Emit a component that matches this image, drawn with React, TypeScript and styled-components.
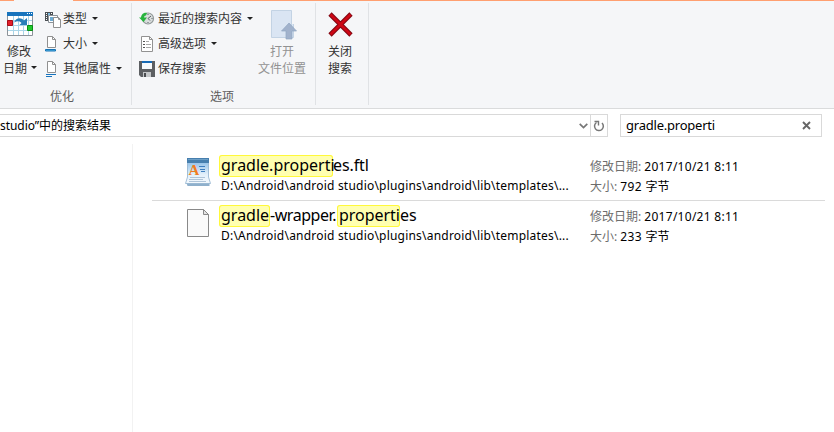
import React from "react";
import styled, { createGlobalStyle } from "styled-components";

const Global = createGlobalStyle`
  * { box-sizing: border-box; }
  body { margin: 0; background: #fff; overflow: hidden; }
  svg { display: block; flex: none; }
`;

const Window = styled.div`
  width: 834px;
  height: 432px;
  display: flex;
  flex-direction: column;
  background: #fff;
  color: #000;
  font: 12px/18px "Noto Sans", "Noto Sans CJK SC", sans-serif;
  white-space: nowrap;
`;

const TopEdge = styled.div`
  height: 1px;
  display: flex;
  justify-content: space-between;
  background: #f5f6f7;
`;
const Accent = styled.div<{ $w: number }>`
  width: ${(p) => p.$w}px;
  background: #ff9f70;
`;

const Ribbon = styled.div`
  height: 108px;
  display: flex;
  background: #f5f6f8;
  border-bottom: 1px solid #dadbdc;
  color: #333;
  font-family: "Noto Sans CJK SC", sans-serif;
`;
const Group = styled.section<{ $w: number }>`
  width: ${(p) => p.$w}px;
  height: 102px;
  margin-top: 2px;
  border-right: 1px solid #e0e2e5;
  display: flex;
  flex-direction: column;
`;
const Controls = styled.div`
  height: 84px;
  display: flex;
`;
const GroupLabel = styled.div<{ $shift?: number }>`
  text-align: center;
  color: #5c5c5c;
  padding-right: ${(p) => p.$shift ?? 0}px;
`;
const BigButton = styled.div<{ $w: number; $ml?: number; $off?: boolean }>`
  width: ${(p) => p.$w}px;
  margin-left: ${(p) => p.$ml ?? 0}px;
  display: flex;
  flex-direction: column;
  align-items: center;
  color: ${(p) => (p.$off ? "#929292" : "inherit")};
`;
const IconSlot = styled.div<{ $top: number; $left?: number }>`
  height: 39px;
  padding: ${(p) => p.$top}px 0 0 ${(p) => p.$left ?? 0}px;
`;
const Line = styled.div<{ $pr?: number }>`
  height: 17px;
  line-height: 17px;
  padding-right: ${(p) => p.$pr ?? 0}px;
  display: flex;
  align-items: center;
`;
const Stack = styled.div<{ $ml: number }>`
  margin-left: ${(p) => p.$ml}px;
  padding-top: 3px;
  display: flex;
  flex-direction: column;
`;
const SmallButton = styled.div<{ $gap: number }>`
  height: 25px;
  display: flex;
  align-items: center;
  gap: ${(p) => p.$gap}px;
  svg { margin-top: 1px; }
  span { margin-bottom: 1px; }
`;
const Caret = styled.i<{ $ml?: number }>`
  margin-left: ${(p) => p.$ml ?? 5}px;
  border: 3px solid transparent;
  border-top-color: #222;
  border-bottom: 0;
`;

const Bars = styled.div`
  height: 35px;
  padding: 5px 12px 7px 0;
  display: flex;
  justify-content: space-between;
`;
const Address = styled.div`
  width: 608px;
  height: 23px;
  border: 1px solid #d9d9d9;
  border-left: 0;
  display: flex;
  align-items: center;
`;
const AddressText = styled.div`
  flex: 1;
  line-height: 21px;
`;
const Latin = styled.span<{ $ls: number }>`
  letter-spacing: ${(p) => p.$ls}px;
`;
const Refresh = styled.div`
  width: 17px;
  height: 21px;
  margin-left: 2px;
  border-left: 1px solid #d9d9d9;
  display: flex;
  align-items: center;
  justify-content: center;
`;
const Search = styled.div`
  width: 202px;
  height: 23px;
  padding: 0 10px 0 5px;
  border: 1px solid #d9d9d9;
  display: flex;
  align-items: center;
  justify-content: space-between;
  font-size: 13px;
  line-height: 21px;
`;

const Body = styled.div`
  flex: 1;
  display: flex;
`;
const NavPane = styled.div`
  width: 133px;
  border-right: 1px solid #f2f2f2;
`;
const Results = styled.div`
  width: 673px;
  margin-left: 19px;
  padding-top: 7px;
`;
const Item = styled.div<{ $last?: boolean }>`
  height: 50px;
  display: flex;
  border-bottom: 1px solid ${(p) => (p.$last ? "transparent" : "#dadada")};
`;
const FileIcon = styled.div`
  width: 67px;
  padding: 6px 0 0 32px;
`;
const Info = styled.div`
  width: 371px;
`;
const Title = styled.div`
  height: 22px;
  margin-top: 4px;
  display: flex;
  font-size: 16px;
  line-height: 22px;
`;
const Part = styled.span<{ $hit?: boolean; $w: number; $ls: number }>`
  width: ${(p) => p.$w}px;
  height: 22px;
  letter-spacing: ${(p) => p.$ls}px;
  padding-left: ${(p) => (p.$hit ? 2 : 0)}px;
  line-height: 21px;
  border-radius: 3px;
  background: ${(p) => (p.$hit ? "#ffffb0" : "none")};
  box-shadow: ${(p) => (p.$hit ? "inset 0 0 0 1px #fff83a" : "none")};
`;
const Path = styled.div`
  padding-left: 2px;
  font-size: 12px;
  line-height: 18px;
`;
const Meta = styled.div`
  padding-top: 6px;
  line-height: 20px;
`;
const Muted = styled.span`
  color: #6d6d6d;
`;

const CalendarIcon = () => (
  <svg width="26" height="24" viewBox="0 0 26 24">
    <path d="M.5.5h25v23H.5z" fill="#fff" stroke="#8b9299" />
    <path d="M6.5 4v19M11.5 4v19M16.5 4v19M21.5 4v19M1 8.5h24M1 13.5h24M1 18.5h24" stroke="#a9d5e8" />
    <path d="M0 0h26v4H0z" fill="#1874bd" />
    <path d="M20 1h1v1h-1zM22 1h1v1h-1zM24 1h1v1h-1z" fill="#fff" />
    <path d="M.5 8.500h5v5h-5z" fill="#e3202b" stroke="#a90b15" />
    <path d="M20.500 13.500h5v5h-5z" fill="#20c82d" stroke="#078e13" />
    <path d="M7 10.500C9 5.500 14 5 17 8.500L20 6v7h-7.500l2-2C12.500 8.500 10 9 7 10.500z" fill="#287fb9" />
  </svg>
);
const DocShape = () => (
  <g transform="translate(2 0)">
    <path d="M.5.5h5l3 3v8h-8z" fill="#fff" stroke="#909090" />
    <path d="M5.5.500v3h3" fill="none" stroke="#909090" />
  </g>
);
const TypeIcon = () => (
  <svg width="17" height="17" viewBox="0 0 17 17">
    <path d="M0 1h8v9H0z" fill="#4b5054" />
    <path d="M1 2h1v1H1zM1 4h1v1H1zM1 6h1v1H1zM1 8h1v1H1zM6 2h1v1H6z" fill="#fff" />
    <path d="M3 2h2v7H3z" fill="#7db9de" />
    <path d="M3.500 4.500h9v7h-9z" fill="#fff" stroke="#8b9298" />
    <path d="M5 6h6v4H5z" fill="#6dabd2" />
    <g transform="translate(8 6)">
      <path d="M.5.5h5l2 2v8h-7z" fill="#fff" stroke="#909090" />
      <path d="M5.500.500v2h2" fill="none" stroke="#909090" />
    </g>
  </svg>
);
const SizeIcon = () => (
  <svg width="15" height="16" viewBox="0 0 15 16">
    <DocShape />
    <path d="M.5 13.500h10v1.500H.5z" fill="#52b9e9" stroke="#1673b5" />
  </svg>
);
const PropsIcon = () => (
  <svg width="15" height="16" viewBox="0 0 15 16">
    <DocShape />
    <path d="M1 13.500h10M1 15.500h6" stroke="#1673bd" />
  </svg>
);
const RecentIcon = () => (
  <svg width="16" height="16" viewBox="0 0 16 16">
    <circle cx="9" cy="7.500" r="5.500" fill="#d9dddd" stroke="#929999" strokeWidth="1.200" />
    <path d="M9 7.500l3-2.500M9 3v1M9 11v1M12.500 7.500h1M9 7.500l2 2" fill="none" stroke="#596166" />
    <path d="M0 6.500h8L4.500 11zM2 7c0-3.500 3-6 6-5L7 4.500C5 4.500 5 6 5 7z" fill="#28b43e" />
  </svg>
);
const OptionsIcon = () => (
  <svg width="16" height="16" viewBox="0 0 16 16">
    <path d="M2.500.500h8l3 3v12h-11z" fill="#fff" stroke="#929292" />
    <path d="M10.500.500v3h3" fill="none" stroke="#929292" />
    <path d="M4 5.500h2M4 8.500h2M4 11.500h2" stroke="#555" />
    <path d="M7 5.500h3M7 8.500h5M7 11.500h5" stroke="#a8a8a8" />
  </svg>
);
const SaveIcon = () => (
  <svg width="16" height="16" viewBox="0 0 16 16">
    <path d="M0 0h16v16H2l-2-2z" fill="#5c5f62" />
    <path d="M3 0h10v8H3z" fill="#f7fafc" />
    <path d="M3 0h10v2H3z" fill="#176bb6" />
    <path d="M4 11h8v5H4z" fill="#c3c6c8" />
    <path d="M5 12h2v4H5z" fill="#4a4d50" />
  </svg>
);
const OpenIcon = () => (
  <svg width="26" height="30" viewBox="0 0 26 30">
    <path d="M.5.500h20v27H.5z" fill="#dae5f3" stroke="#c3d3e4" />
    <path d="M20.500 14v13.500h2V14" fill="#dae5f3" stroke="#c3d3e4" />
    <path d="M18 13l7.500 8H21v8h-6v-8h-4.500z" fill="#a1b2cc" stroke="#91a6c1" strokeWidth=".7" />
  </svg>
);
const CloseIcon = () => (
  <svg width="25" height="25" viewBox="0 0 25 25">
    <path d="M2 2l21 21M23 2L2 23" stroke="#7c0510" strokeWidth="4.600" />
    <path d="M2.500 2.500l20 20M22.500 2.500l-20 20" stroke="#cd0715" strokeWidth="2.800" />
  </svg>
);
const Letter = styled.text`
  font: bold 15px "Liberation Serif", serif;
  fill: #f07c22;
`;
const FtlIcon = () => (
  <svg width="28" height="31" viewBox="0 0 28 31">
    <defs>
      <linearGradient id="sheet" x1="0" y1="0" x2="0" y2="1">
        <stop offset="0" stopColor="#8dbde6" />
        <stop offset=".6" stopColor="#e3f0fb" />
        <stop offset="1" stopColor="#f4f9fd" />
      </linearGradient>
    </defs>
    <path d="M2.500 26h23v3h-22z" fill="#8fb0cc" />
    <path d="M3.500 4h21v16l2 6.500h-25l2-6.500z" fill="url(#sheet)" stroke="#8fb1ce" strokeWidth=".8" />
    <path d="M3 1h22v5H3z" fill="#477fae" />
    <path d="M4 2.500h20" stroke="#6d9fc6" />
    <Letter x="4.500" y="18">A</Letter>
    <path d="M15 9.500h6M16 12.500h5M17 14.500h4" stroke="#3f7fc0" />
    <path d="M6 20.500h15M5 22.500h14M5 24.500h17" stroke="#9fb8cf" strokeWidth=".8" />
  </svg>
);
const BlankIcon = () => (
  <svg width="28" height="31" viewBox="0 0 28 31">
    <path d="M3.500 2.500h16l5 5v22h-21z" fill="#fafafa" stroke="#898989" />
    <path d="M19.500 2.500v5h5z" fill="#e4e4e4" stroke="#898989" />
  </svg>
);

const path = "D:\\Android\\android studio\\plugins\\android\\lib\\templates\\...";

type PartData = { text: string; hit?: boolean; w: number; ls: number };
type FileData = { icon: React.ReactNode; parts: PartData[]; size: string };

const files: FileData[] = [
  {
    icon: <FtlIcon />,
    size: "792",
    parts: [
      { text: "gradle.properti", hit: true, w: 114, ls: 0 },
      { text: "es.ftl", w: 50, ls: -0.1 },
    ],
  },
  {
    icon: <BlankIcon />,
    size: "233",
    parts: [
      { text: "gradle", hit: true, w: 51, ls: 0 },
      { text: "-wrapper.", w: 67, ls: -0.45 },
      { text: "properti", hit: true, w: 63, ls: -0.05 },
      { text: "es", w: 30, ls: -0.1 },
    ],
  },
];

export default function App() {
  return (
    <Window>
      <Global />
      <TopEdge>
        <Accent $w={14} />
        <Accent $w={761} />
      </TopEdge>
      <Ribbon>
        <Group $w={132}>
          <Controls>
            <BigButton $w={40}>
              <IconSlot $top={9}><CalendarIcon /></IconSlot>
              <Line $pr={2}>修改</Line>
              <Line>日期<Caret $ml={4} /></Line>
            </BigButton>
            <Stack $ml={5}>
              <SmallButton $gap={1}><TypeIcon /><span>类型</span><Caret $ml={4} /></SmallButton>
              <SmallButton $gap={3}><SizeIcon /><span>大小</span><Caret $ml={2} /></SmallButton>
              <SmallButton $gap={3}><PropsIcon /><span>其他属性</span><Caret $ml={2} /></SmallButton>
            </Stack>
          </Controls>
          <GroupLabel $shift={7}>优化</GroupLabel>
        </Group>
        <Group $w={184}>
          <Controls>
            <Stack $ml={7}>
              <SmallButton $gap={3}><RecentIcon /><span>最近的搜索内容</span><Caret $ml={2} /></SmallButton>
              <SmallButton $gap={3}><OptionsIcon /><span>高级选项</span><Caret $ml={2} /></SmallButton>
              <SmallButton $gap={3}><SaveIcon /><span>保存搜索</span></SmallButton>
            </Stack>
            <BigButton $w={52} $ml={3} $off>
              <IconSlot $top={7} $left={4}><OpenIcon /></IconSlot>
              <Line>打开</Line>
              <Line>文件位置</Line>
            </BigButton>
          </Controls>
          <GroupLabel $shift={3}>选项</GroupLabel>
        </Group>
        <Group $w={53}>
          <Controls>
            <BigButton $w={48}>
              <IconSlot $top={9} $left={1}><CloseIcon /></IconSlot>
              <Line>关闭</Line>
              <Line>搜索</Line>
            </BigButton>
          </Controls>
        </Group>
      </Ribbon>
      <Bars>
        <Address>
          <AddressText><Latin $ls={-0.05}>studio”</Latin>中的搜索结果</AddressText>
          <svg width="9" height="6" viewBox="0 0 9 6"><path d="M.7 .8L4.500 4.600 8.300.8" fill="none" stroke="#777" strokeWidth="1.700" /></svg>
          <Refresh>
            <svg width="12" height="12" viewBox="0 0 12 12">
              <path d="M3.500 2.500A4.400 4.400 0 1 0 9 3" fill="none" stroke="#777" strokeWidth="1.500" />
              <path d="M1.500 1.500h4v4" fill="none" stroke="#777" strokeWidth="1.400" />
            </svg>
          </Refresh>
        </Address>
        <Search>
          <Latin $ls={-0.22}>gradle.properti</Latin>
          <svg width="9" height="9" viewBox="0 0 9 9"><path d="M1 1l7 7M8 1L1 8" stroke="#666" strokeWidth="1.900" /></svg>
        </Search>
      </Bars>
      <Body>
        <NavPane />
        <Results>
          {files.map((f, i) => (
            <Item key={f.size} $last={i === files.length - 1}>
              <FileIcon>{f.icon}</FileIcon>
              <Info>
                <Title>
                  {f.parts.map((p) => (
                    <Part key={p.text} $hit={p.hit} $w={p.w} $ls={p.ls}>{p.text}</Part>
                  ))}
                </Title>
                <Path><Latin $ls={0.21}>{path}</Latin></Path>
              </Info>
              <Meta>
                <div><Muted>修改日期:</Muted> <Latin $ls={0.27}>2017/10/21 8:11</Latin></div>
                <div><Muted>大小:</Muted> <Latin $ls={0.35}>{f.size} </Latin>字节</div>
              </Meta>
            </Item>
          ))}
        </Results>
      </Body>
    </Window>
  );
}
